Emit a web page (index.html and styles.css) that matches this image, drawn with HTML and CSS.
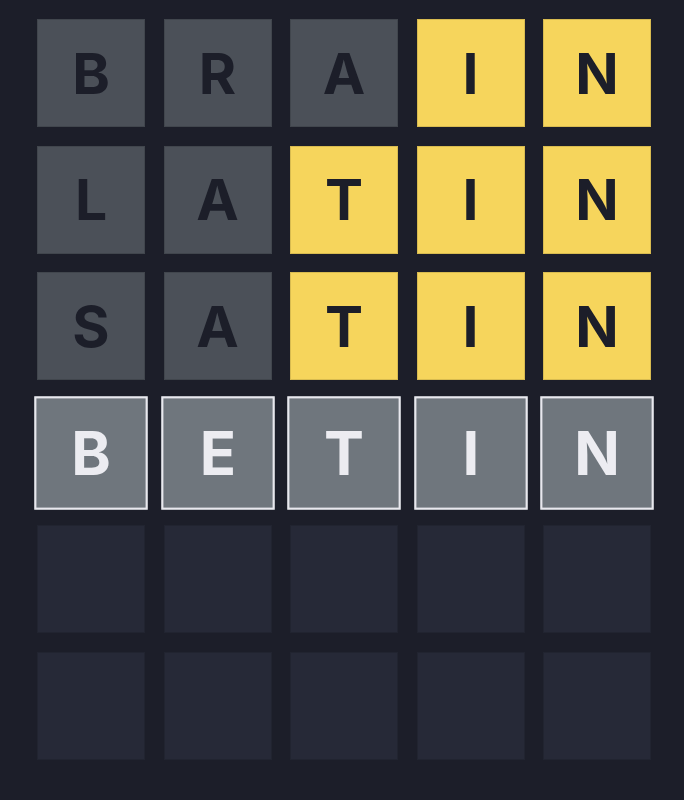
FILE: index.html
```html
<!DOCTYPE html>
<html lang="en">
<head>
  <meta charset="UTF-8">
  <title>Word Guess</title>
  <link rel="stylesheet" href="styles.css">
</head>
<body>

<div class="board">
  <div class="row">
    <div class="tile absent">B</div>
    <div class="tile absent">R</div>
    <div class="tile absent">A</div>
    <div class="tile present">I</div>
    <div class="tile present">N</div>
  </div>
  <div class="row">
    <div class="tile absent">L</div>
    <div class="tile absent">A</div>
    <div class="tile present">T</div>
    <div class="tile present">I</div>
    <div class="tile present">N</div>
  </div>
  <div class="row">
    <div class="tile absent">S</div>
    <div class="tile absent">A</div>
    <div class="tile present">T</div>
    <div class="tile present">I</div>
    <div class="tile present">N</div>
  </div>
  <div class="row">
    <div class="tile typed">B</div>
    <div class="tile typed">E</div>
    <div class="tile typed">T</div>
    <div class="tile typed">I</div>
    <div class="tile typed">N</div>
  </div>
  <div class="row">
    <div class="tile"></div>
    <div class="tile"></div>
    <div class="tile"></div>
    <div class="tile"></div>
    <div class="tile"></div>
  </div>
  <div class="row">
    <div class="tile"></div>
    <div class="tile"></div>
    <div class="tile"></div>
    <div class="tile"></div>
    <div class="tile"></div>
  </div>
</div>

</body>
</html>
```

FILE: styles.css
```css
body {
  margin: 0;
  background-color: #1c1e29;
  font-family: Inter, "Noto Sans", sans-serif;
}

.board {
  display: flex;
  flex-direction: column;
  gap: 18.6px;
  padding: 19px 0 0 37px;
}

.row {
  display: flex;
  gap: 18.5px;
}

.tile {
  box-sizing: border-box;
  width: 108px;
  height: 108px;
  display: flex;
  align-items: center;
  justify-content: center;
  background-color: #262937;
  border: 1px solid rgba(0, 0, 0, 0.12);
  color: #1c1e29;
  font-size: 57px;
  font-weight: 700;
  line-height: 1;
}

.tile.absent {
  background-color: #4b5058;
}

.tile.present {
  background-color: #f6d55c;
}

/* letters of the row being typed */
.tile.typed {
  background-color: #6f767d;
  border: 2.5px solid #e8e8ee;
  color: #ececf1;
  transform: scale(1.05);
}
```
